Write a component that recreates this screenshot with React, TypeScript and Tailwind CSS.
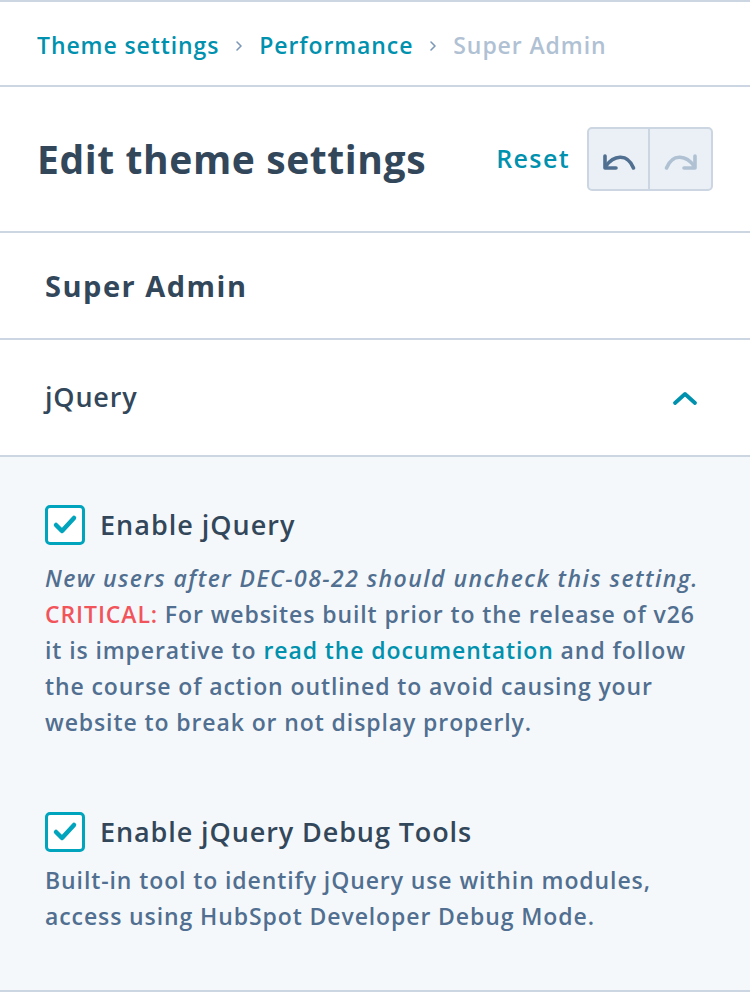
import React from "react";

function Chevron() {
  return (
    <svg width="12" height="12" viewBox="0 0 12 12" fill="none" className="mx-[14px]">
      <path d="M4 2 L8 6 L4 10" stroke="#7c98b6" strokeWidth="1.6" strokeLinecap="round" strokeLinejoin="round" />
    </svg>
  );
}

function UndoIcon({ color, flip }: { color: string; flip?: boolean }) {
  return (
    <svg width="34" height="20" viewBox="0 0 34 20" fill="none" style={flip ? { transform: "scaleX(-1)" } : undefined}>
      <path d="M3 17 L3 5 M3 17 L14 17" stroke={color} strokeWidth="3.6" strokeLinecap="round" strokeLinejoin="round" />
      <path d="M4 15 C 11 5, 25 1, 31.5 17" stroke={color} strokeWidth="3.6" strokeLinecap="round" fill="none" />
    </svg>
  );
}

function Checkbox() {
  return (
    <div className="w-[40px] h-[40px] shrink-0 rounded-[5px] border-[3px] border-[#00a4bd] bg-white flex items-center justify-center">
      <svg width="26" height="22" viewBox="0 0 26 22" fill="none">
        <path d="M4 11 L10 17 L22 4" stroke="#00a4bd" strokeWidth="4.5" strokeLinecap="round" strokeLinejoin="round" />
      </svg>
    </div>
  );
}

export default function App() {
  const font = { fontFamily: '"Open Sans", "Noto Sans", sans-serif' };
  return (
    <div className="w-[750px] h-[992px] bg-white overflow-hidden flex flex-col" style={font}>
      <div className="border-t-2 border-[#cbd6e2] h-[87px] flex items-center px-[37px] pt-[4px] border-b-2 shrink-0">
        <span className="text-[23px] font-semibold text-[#0091ae] tracking-[0.9px]">Theme settings</span>
        <Chevron />
        <span className="text-[23px] font-semibold text-[#0091ae] tracking-[0.9px]">Performance</span>
        <Chevron />
        <span className="text-[23px] font-semibold text-[#b0c1d4] tracking-[0.9px]">Super Admin</span>
      </div>
      <div className="h-[146px] shrink-0 flex items-center justify-between pl-[37px] pr-[37px] border-b-2 border-[#cbd6e2]">
        <h1 className="text-[39px] font-bold text-[#33475b] tracking-[0.6px]">Edit theme settings</h1>
        <div className="flex items-center">
          <span className="text-[25px] font-semibold text-[#0091ae] tracking-[1.4px] mr-[17px]">Reset</span>
          <div className="flex h-[64px] rounded-[5px] border-2 border-[#cbd6e2] bg-[#eaf0f6] overflow-hidden">
            <div className="w-[61px] flex items-center justify-center border-r-2 border-[#cbd6e2] pt-[3px]">
              <UndoIcon color="#516f90" />
            </div>
            <div className="w-[61px] flex items-center justify-center pt-[3px]">
              <UndoIcon color="#b0c1d4" flip />
            </div>
          </div>
        </div>
      </div>
      <div className="h-[107px] shrink-0 flex items-center px-[45px] border-b-2 border-[#cbd6e2]">
        <span className="text-[29px] font-bold text-[#33475b] tracking-[1.5px]">Super Admin</span>
      </div>
      <div className="h-[117px] shrink-0 flex items-center justify-between px-[45px] border-b-2 border-[#cbd6e2]">
        <span className="text-[27px] font-semibold text-[#33475b] tracking-[0.8px]">jQuery</span>
        <svg width="26" height="16" viewBox="0 0 26 16" fill="none" className="mr-[7px]">
          <path d="M3 13 L13 4 L23 13" stroke="#0091ae" strokeWidth="3.8" strokeLinecap="round" strokeLinejoin="round" />
        </svg>
      </div>
      <div className="flex-1 bg-[#f5f8fa] border-b-2 border-[#cbd6e2] px-[45px] pt-[48px]">
        <div className="flex items-center gap-[15px]">
          <Checkbox />
          <span className="text-[27px] font-semibold text-[#33475b] tracking-[1px]">Enable jQuery</span>
        </div>
        <div className="mt-[14px] text-[23px] leading-[36px] text-[#516f90] font-semibold tracking-[0.9px] whitespace-nowrap">
          <div className="italic tracking-[1.45px]">New users after DEC-08-22 should uncheck this setting.</div>
          <div>
            <span className="text-[#f2545b]">CRITICAL:</span> For websites built prior to the release of v26
          </div>
          <div>
            it is imperative to <span className="text-[#0091ae]">read the documentation</span> and follow
          </div>
          <div>the course of action outlined to avoid causing your</div>
          <div>website to break or not display properly.</div>
        </div>
        <div className="flex items-center gap-[15px] mt-[72px]">
          <Checkbox />
          <span className="text-[27px] font-semibold text-[#33475b] tracking-[0.9px]">Enable jQuery Debug Tools</span>
        </div>
        <div className="mt-[10px] text-[23px] leading-[36px] text-[#516f90] font-semibold tracking-[0.9px] whitespace-nowrap">
          <div>Built-in tool to identify jQuery use within modules,</div>
          <div>access using HubSpot Developer Debug Mode.</div>
        </div>
      </div>
    </div>
  );
}
